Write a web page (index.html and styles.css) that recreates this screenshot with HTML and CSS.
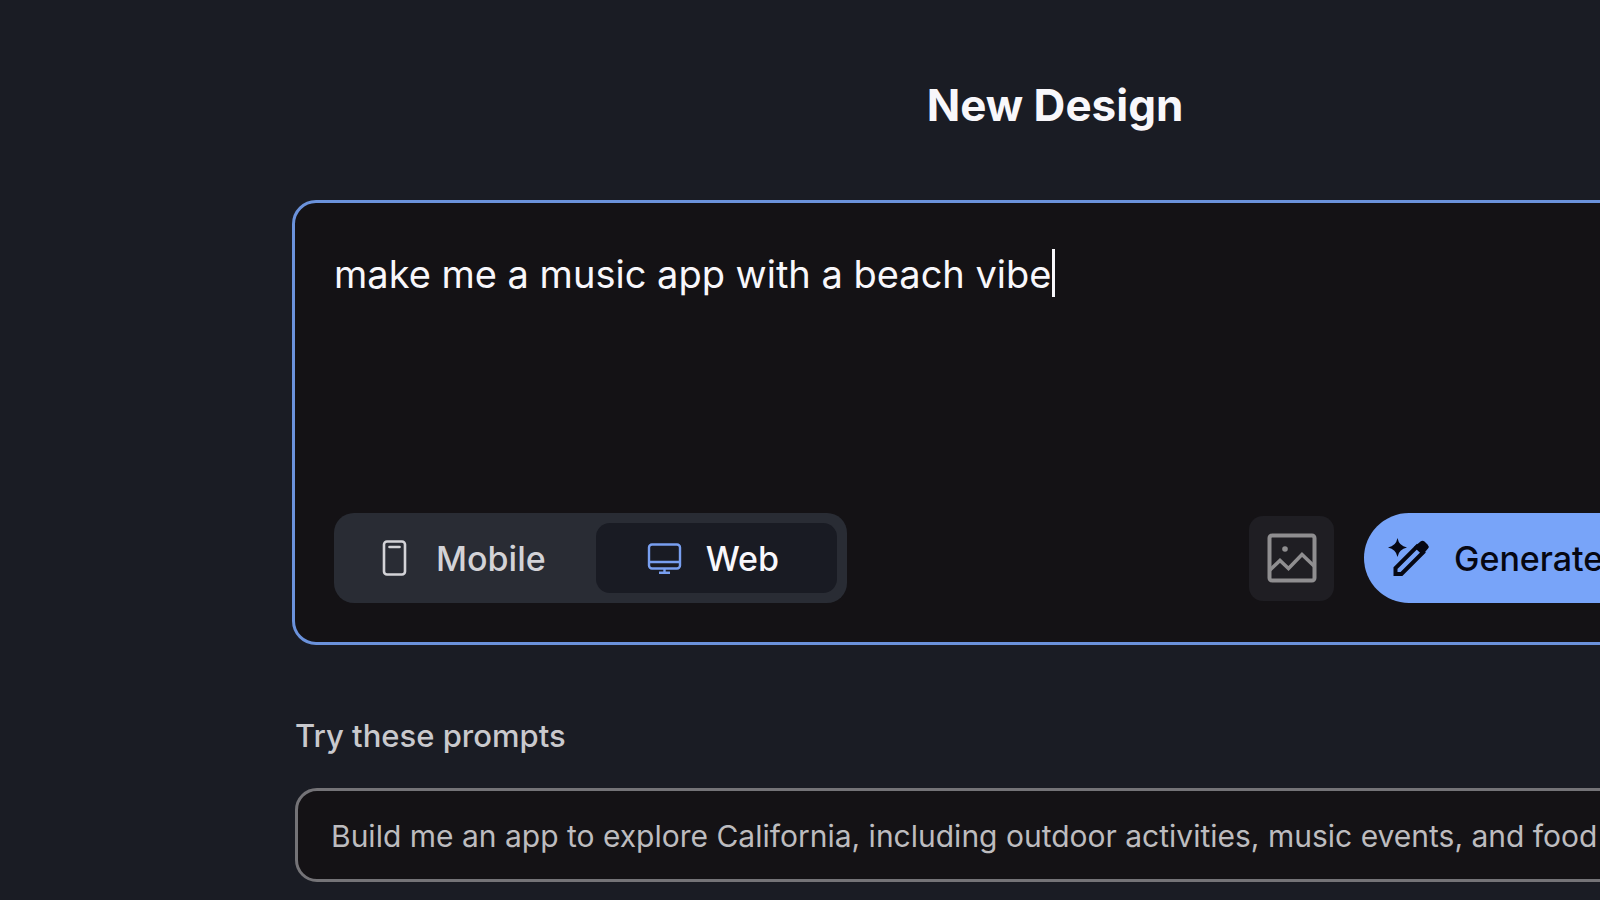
FILE: index.html
```
<!DOCTYPE html>
<html lang="en">
  <head>
    <meta charset="UTF-8" />
    <meta name="viewport" content="width=device-width, initial-scale=1.0" />
    <title>New Design</title>
    <link rel="stylesheet" href="styles.css">
  </head>

  <body>
    <main class="new_design">
      <h1 class="title">New Design</h1>

      <form class="prompt_panel">
        <div class="prompt_field">
          <textarea class="prompt_input" aria-label="Prompt" spellcheck="false">make me a music app with a beach vibe</textarea>
          <span class="caret"></span>
        </div>
        <div class="toolbar">
          <div class="platform_switch">
            <button type="button" class="platform_btn mobile" aria-pressed="false">
              <svg width="36" height="36" viewBox="0 0 36 36" fill="none" stroke="currentColor" stroke-width="2.6">
                <rect x="8" y="1.500" width="21" height="33" rx="3" />
                <path d="M13.500 7h10" stroke-linecap="round" />
              </svg>
              Mobile
            </button>
            <button type="button" class="platform_btn web active" aria-pressed="true">
              <svg width="36" height="36" viewBox="0 0 36 36" fill="none" stroke="currentColor" stroke-width="2.4">
                <rect x="3" y="4.500" width="31" height="24" rx="3" />
                <path d="M3 22h31M18.500 28.500v4M13 32.800h11" />
              </svg>
              Web
            </button>
          </div>
          <div class="actions">
            <button type="button" class="image_btn" aria-label="Add image">
              <svg width="50" height="50" viewBox="0 0 50 50" fill="none" stroke="currentColor" stroke-width="4">
                <rect x="2.500" y="2.500" width="45" height="45" rx="2.500" />
                <path d="M3 37L13 27.500L21.500 35.500L35 21.500L47 33" stroke-width="3.500" />
                <circle cx="18" cy="16" r="2.800" fill="currentColor" stroke="none" />
              </svg>
            </button>
            <button type="submit" class="generate_btn">
              <svg width="42" height="40" viewBox="0 0 42 40">
                <path d="M9.500 0Q11 8 19 9.500Q11 11 9.500 19Q8 11 0 9.500Q8 8 9.500 0Z" fill="currentColor" />
                <path d="M7.500 36V30L29 8.500L35 14.500L13.500 36Z" fill="none" stroke="currentColor" stroke-width="4" />
                <path d="M26 9L32.500 3.500Q34.500 2 36.500 3.500L39.500 6.500Q41.500 8.500 40 10.500L34.500 17Z" fill="currentColor" />
              </svg>
              Generate
            </button>
          </div>
        </div>
      </form>

      <h2 class="prompts_title">Try these prompts</h2>
      <button type="button" class="prompt_card">Build me an app to explore California, including outdoor activities, music events, and food</button>
    </main>
  </body>
</html>
```
FILE: styles.css
```
* {
  box-sizing: border-box;
}

body {
  margin: 0;
  background-color: #1a1c24;
  color: #f8f7fb;
  font-family: Inter, "Liberation Sans", sans-serif;
  overflow: hidden;
}

button,
textarea {
  font-family: inherit;
  border: none;
  margin: 0;
}

button {
  cursor: pointer;
}

/* the canvas is wider than the window, it runs off the right edge */
.new_design {
  width: calc(100% - 74px);
  margin-left: 292px;
  padding-top: 78px;
}

.title {
  margin: 0 0 68px;
  font-size: 44px;
  line-height: 54px;
  font-weight: 700;
  text-align: center;
}

.prompt_panel {
  padding: 46px 39px 39px;
  background-color: #141215;
  border: 3px solid #6b92db;
  border-radius: 24px;
}

.prompt_field {
  position: relative;
}

.prompt_input {
  display: block;
  width: 100%;
  height: 264px;
  padding: 0;
  background: none;
  color: inherit;
  font-size: 38px;
  line-height: 50px;
  outline: none;
  resize: none;
}

.caret {
  position: absolute;
  left: 718px;
  top: 0;
  width: 3px;
  height: 48px;
  background-color: #f8f7fb;
}

.toolbar {
  display: flex;
  justify-content: space-between;
  align-items: center;
}

.platform_switch {
  display: flex;
  padding: 10px;
  background-color: #292c34;
  border-radius: 20px;
}

.platform_btn {
  display: flex;
  align-items: center;
  gap: 24px;
  height: 70px;
  padding: 0 50px;
  border-radius: 14px;
  background: none;
  color: #d3d3d7;
  font-size: 34px;
  font-weight: 500;
}

.platform_btn.mobile {
  padding-left: 32px;
}

.platform_btn.active {
  padding-right: 58px;
  background-color: #191b23;
  color: #f8f7fb;
}

.platform_btn.active svg {
  color: #789ff0;
}

.actions {
  display: flex;
  align-items: center;
  gap: 30px;
}

.image_btn {
  display: flex;
  align-items: center;
  justify-content: center;
  width: 85px;
  height: 85px;
  padding: 0;
  border-radius: 14px;
  background-color: #1f1e23;
  color: #8f8e90;
}

.generate_btn {
  display: flex;
  align-items: center;
  gap: 24px;
  width: 412px;
  height: 90px;
  padding: 0 24px;
  border-radius: 45px;
  background-color: #78a4f9;
  color: #060712;
  font-size: 34px;
  font-weight: 500;
}

.prompts_title {
  margin: 71px 0 32px 3px;
  color: #c9c9cd;
  font-size: 31px;
  line-height: 40px;
  font-weight: 500;
}

.prompt_card {
  display: block;
  width: calc(100% - 6px);
  height: 94px;
  margin-left: 3px;
  padding: 2px 33px 0;
  background-color: #141215;
  border: 3px solid #747377;
  border-radius: 22px;
  color: #bdbcbf;
  font-size: 30px;
  text-align: left;
  white-space: nowrap;
}
```
